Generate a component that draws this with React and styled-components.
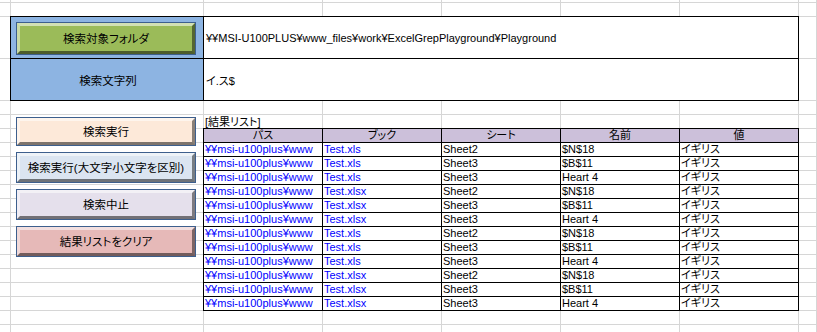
import React from "react";
import styled, { createGlobalStyle } from "styled-components";

const Global = createGlobalStyle`
  html, body { margin: 0; padding: 0; background: #fff; }
  body { overflow: hidden; }
`;

const COLS = "11px 193px repeat(5, 119px) 1fr";
const ROWS = "3px 14px 42px 42px repeat(17, 14px)";

const Sheet = styled.div`
  display: grid;
  width: 817px;
  height: 332px;
  overflow: hidden;
  font-family: "Liberation Sans", "Noto Sans CJK JP", sans-serif;
  font-size: 11px;
  font-feature-settings: "palt";
  color: #000;
  & > * { grid-area: 1 / 1; }
`;

const Layer = styled.div`
  display: grid;
  grid-template-columns: ${COLS};
  grid-template-rows: ${ROWS};
  width: 817px;
`;

const GridCell = styled.div`
  box-sizing: border-box;
  border-right: 1px solid #d6d6d6;
  border-bottom: 1px solid #d6d6d6;
`;

const TopBlock = styled.div`
  grid-column: 2 / 8;
  grid-row: 3 / 5;
  margin: -1px 0 0 -1px;
  border-top: 1px solid #000;
  border-left: 1px solid #000;
  display: grid;
  grid-template-columns: 193px 595px;
  grid-template-rows: 42px 42px;
`;

const BlockCell = styled.div`
  box-sizing: border-box;
  border-right: 1px solid #000;
  border-bottom: 1px solid #000;
  background: ${(p) => (p.$label ? "#8db4e2" : "#fff")};
  display: flex;
  align-items: ${(p) => (p.$top ? "flex-start" : "center")};
  justify-content: ${(p) => (p.$center ? "center" : "flex-start")};
  padding: ${(p) => (p.$top ? "5px 0 0 5px" : "0 0 0 2px")};
  white-space: nowrap;
  font-size: ${(p) => (p.$label ? "11.5px" : "11px")};
`;

const ButtonColumn = styled.div`
  grid-column: 2 / 3;
  grid-row: 5 / 22;
  display: flex;
  flex-direction: column;
  gap: 6px;
  padding: 16px 0 0 5px;
`;

const Button = styled.button`
  box-sizing: border-box;
  width: 180px;
  height: ${(p) => p.$h}px;
  flex: none;
  padding: 0;
  margin: 0;
  border: 1px solid #3d5f8d;
  background: ${(p) => p.$face};
  font: inherit;
  color: #000;
  display: flex;
  cursor: default;
`;

const Bevel = styled.span`
  flex: 1;
  box-sizing: border-box;
  border: 3px solid;
  border-color: rgba(255, 255, 255, 0.55) rgba(0, 0, 0, 0.45)
    rgba(0, 0, 0, 0.5) rgba(255, 255, 255, 0.45);
  display: flex;
  align-items: center;
  justify-content: center;
  white-space: nowrap;
  font-size: 11.5px;
  line-height: 14px;
`;

const Label = styled.div`
  grid-column: 3 / 5;
  grid-row: 6 / 7;
  align-self: end;
  padding-left: 1px;
  line-height: 13px;
  white-space: nowrap;
`;

const Table = styled.div`
  grid-column: 3 / 8;
  grid-row: 7 / 20;
  margin: -1px 0 0 -1px;
  border-top: 1px solid #000;
  border-left: 1px solid #000;
  display: grid;
  grid-template-columns: repeat(5, 119px);
  grid-auto-rows: 14px;
  background: #fff;
`;

const Cell = styled.div`
  box-sizing: border-box;
  border-right: 1px solid #000;
  border-bottom: 1px solid #000;
  white-space: nowrap;
  line-height: 13px;
  padding-left: 1px;
  color: ${(p) => (p.$link ? "#0000ff" : "#000")};
`;

const HeadCell = styled(Cell)`
  background: #ccc0da;
  text-align: center;
  padding-left: 0;
`;

const headers = ["パス", "ブック", "シート", "名前", "値"];
const PATH = "¥¥msi-u100plus¥www";
const base = [
  ["Sheet2", "$N$18"],
  ["Sheet3", "$B$11"],
  ["Sheet3", "Heart 4"],
];
const rows = [];
["Test.xls", "Test.xlsx", "Test.xls", "Test.xlsx"].forEach((book) => {
  base.forEach(([sheet, name]) => rows.push({ book, sheet, name }));
});

const buttons = [
  { text: "検索実行", face: "#fde9d9", h: 29 },
  { text: "検索実行(大文字小文字を区別)", face: "#dbe5f1", h: 31 },
  { text: "検索中止", face: "#e5e0ec", h: 31 },
  { text: "結果リストをクリア", face: "#e6b9b8", h: 31 },
];

export default function App() {
  const gridCells = [];
  for (let i = 0; i < 8 * 21; i++) gridCells.push(<GridCell key={i} />);
  return (
    <>
      <Global />
      <Sheet>
        <Layer>{gridCells}</Layer>
        <Layer>
          <TopBlock>
            <BlockCell $label $top>
              <Button $face="#9bbb59" $h={33}>
                <Bevel>検索対象フォルダ</Bevel>
              </Button>
            </BlockCell>
            <BlockCell>
              ¥¥MSI-U100PLUS¥www_files¥work¥ExcelGrepPlayground¥Playground
            </BlockCell>
            <BlockCell $label $center>
              検索文字列
            </BlockCell>
            <BlockCell>イ.ス$</BlockCell>
          </TopBlock>
          <ButtonColumn>
            {buttons.map((b) => (
              <Button key={b.text} $face={b.face} $h={b.h}>
                <Bevel>{b.text}</Bevel>
              </Button>
            ))}
          </ButtonColumn>
          <Label>[結果リスト]</Label>
          <Table>
            {headers.map((h) => (
              <HeadCell key={h}>{h}</HeadCell>
            ))}
            {rows.map((r, i) => (
              <React.Fragment key={i}>
                <Cell $link>{PATH}</Cell>
                <Cell $link>{r.book}</Cell>
                <Cell>{r.sheet}</Cell>
                <Cell>{r.name}</Cell>
                <Cell>イギリス</Cell>
              </React.Fragment>
            ))}
          </Table>
        </Layer>
      </Sheet>
    </>
  );
}
